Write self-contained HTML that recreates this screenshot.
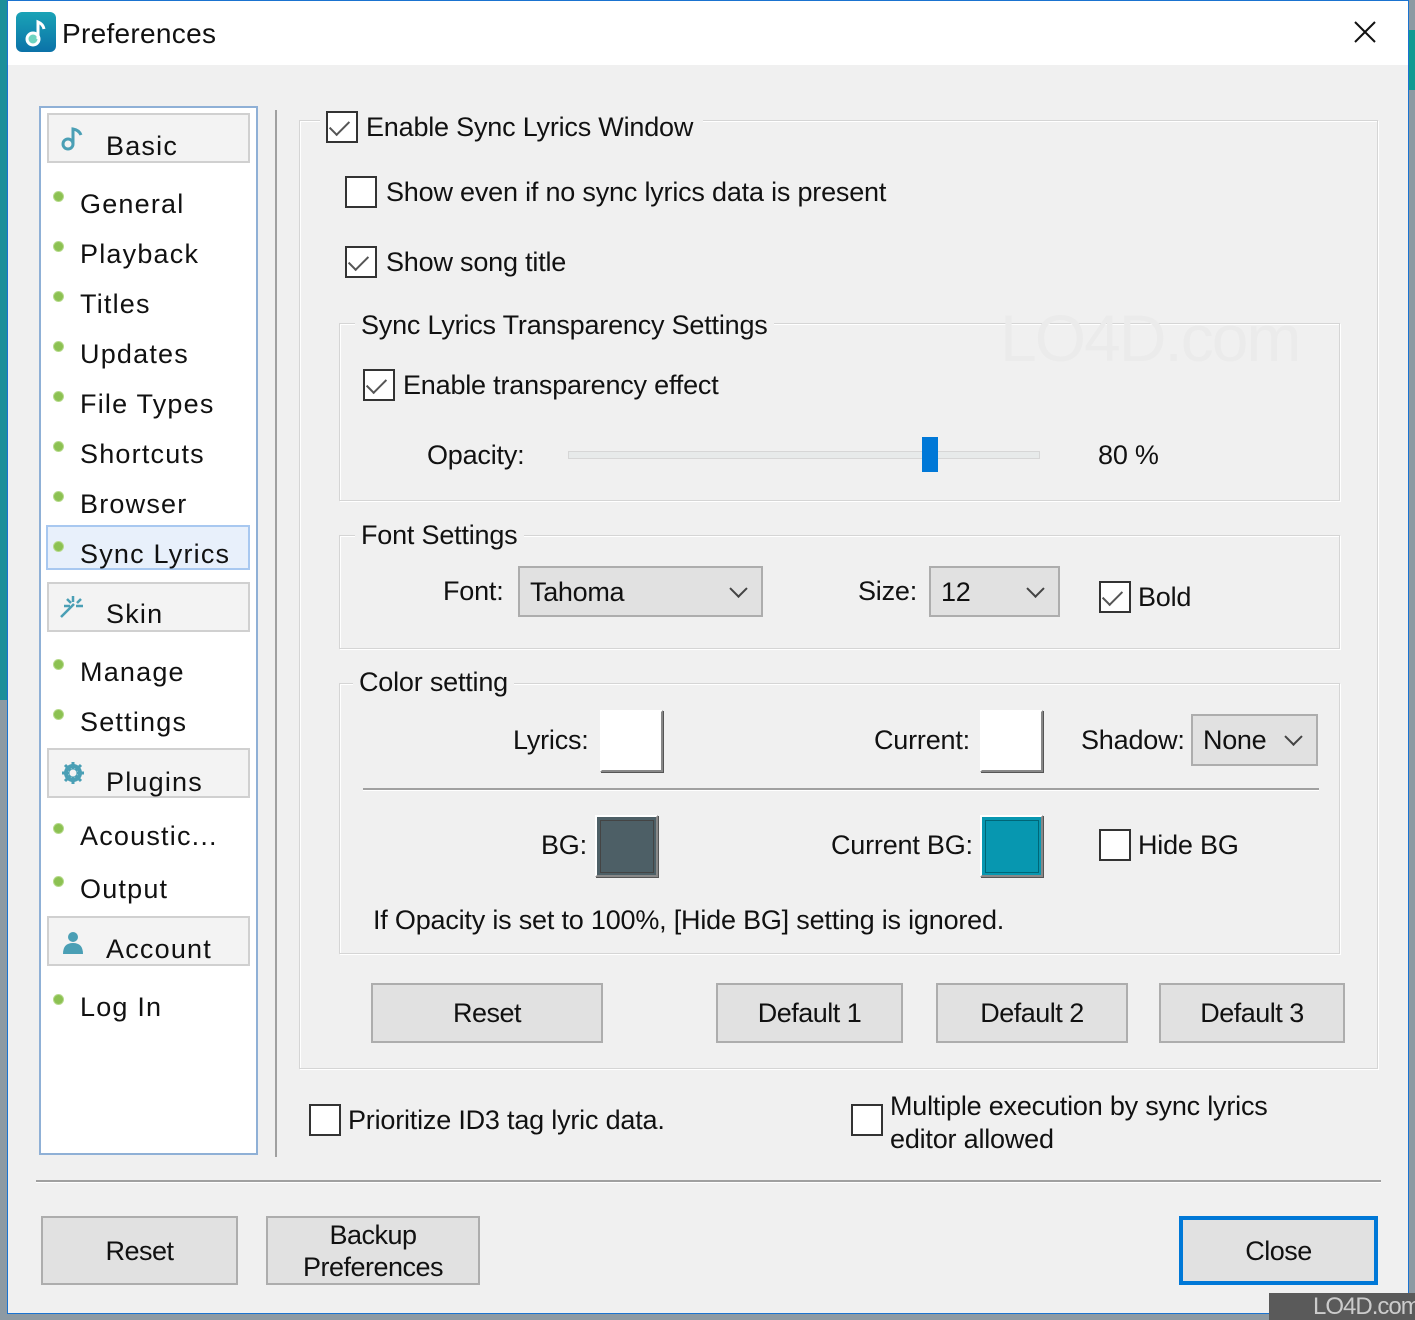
<!DOCTYPE html>
<html><head><meta charset="utf-8"><style>
*{box-sizing:border-box;margin:0;padding:0}
body{width:1415px;height:1320px;position:relative;overflow:hidden;background:#8d9aa3;font-family:"Liberation Sans",sans-serif;color:#111}
.a{position:absolute}
.t{position:absolute;font-size:27px;line-height:30px;white-space:nowrap}
.l{letter-spacing:1.2px}
.n{letter-spacing:-0.2px}
.cb{position:absolute;width:32px;height:32px;border:2px solid #333;background:#fff}
.cb.c::after{content:"";position:absolute;left:6px;top:3px;width:9px;height:17px;border-right:2.5px solid #555;border-bottom:2.5px solid #555;transform:rotate(45deg)}
.grp{position:absolute;border:1px solid #d5d5d5;box-shadow:1px 1px 0 #fff inset,1px 1px 0 #fff}
.lg{position:absolute;background:#f0f0f0;padding:0 6px;font-size:27px;line-height:30px;letter-spacing:-0.2px;white-space:nowrap}
.btn{position:absolute;background:#e1e1e1;border:2px solid #adadad;font-size:27px;display:flex;align-items:center;justify-content:center;text-align:center;line-height:32px;letter-spacing:-0.5px}
.cmb{position:absolute;background:#e1e1e1;border:2px solid #adadad;font-size:27px;line-height:30px;padding-left:10px;display:flex;align-items:center;letter-spacing:-0.3px}
.cmb::after{content:"";position:absolute;right:16px;top:50%;width:11px;height:11px;border-right:2px solid #444;border-bottom:2px solid #444;transform:translateY(-75%) rotate(45deg)}
.sw{position:absolute;width:63px;height:62px;border:2px solid #fff;border-right-color:#888;border-bottom-color:#888;box-shadow:1px 1px 0 #555}
.sw i{position:absolute;left:3px;top:3px;right:2px;bottom:2px;border:1px solid #aaa}
.hd{position:absolute;left:47px;width:203px;height:50px;background:#f3f3f3;border:2px solid #d0d0d0}
.bl{position:absolute;left:54px;width:9px;height:9px;border-radius:50%;background:#8cc152;box-shadow:0 0 0 1px #b5d98a}
</style></head><body>
<div class="a" style="left:0;top:0;width:8px;height:700px;background:#1b8f9a"></div>
<div class="a" style="left:1408px;top:30px;width:7px;height:60px;background:#129a92"></div>
<div class="a" style="left:7px;top:0;width:1402px;height:1314px;background:#f0f0f0;border:1px solid #1a73d0"></div>
<div class="a" style="left:8px;top:1px;width:1400px;height:64px;background:#fff"></div>
<div class="a" style="left:16px;top:12px;width:40px;height:40px;border-radius:6px;background:linear-gradient(#1aa3b6,#0b72a8)"></div>
<svg class="a" style="left:16px;top:12px" width="40" height="40"><circle cx="17" cy="27" r="6" fill="#6fd4c0"/><path d="M22 27 V10 q5 2 6 7" stroke="#fff" stroke-width="3" fill="none"/><circle cx="17" cy="27" r="6" fill="none" stroke="#fff" stroke-width="3"/></svg>
<div class="t" style="left:62px;top:19px;font-size:28px;letter-spacing:0.3px">Preferences</div>
<svg class="a" style="left:1354px;top:21px" width="22" height="22"><path d="M1 1L21 21M21 1L1 21" stroke="#111" stroke-width="2"/></svg>

<!-- left list -->
<div class="a" style="left:39px;top:106px;width:219px;height:1049px;background:#fff;border:2px solid #8fb0d6"></div>
<div class="hd" style="top:113px"></div>
<svg class="a" style="left:60px;top:124px" width="26" height="28"><path d="M13 20V5q6 1 8 6" stroke="#4a9fb5" stroke-width="3" fill="none"/><circle cx="8" cy="20" r="5" fill="none" stroke="#4a9fb5" stroke-width="3"/></svg>
<div class="t l" style="left:106px;top:131px">Basic</div>
<div class="a" style="left:46px;top:525px;width:204px;height:45px;background:#e8f0fb;border:2px solid #a8c8f0"></div>
<div class="bl" style="top:192px"></div><div class="t l" style="left:80px;top:189px">General</div>
<div class="bl" style="top:242px"></div><div class="t l" style="left:80px;top:239px">Playback</div>
<div class="bl" style="top:292px"></div><div class="t l" style="left:80px;top:289px">Titles</div>
<div class="bl" style="top:342px"></div><div class="t l" style="left:80px;top:339px">Updates</div>
<div class="bl" style="top:392px"></div><div class="t l" style="left:80px;top:389px">File Types</div>
<div class="bl" style="top:442px"></div><div class="t l" style="left:80px;top:439px">Shortcuts</div>
<div class="bl" style="top:492px"></div><div class="t l" style="left:80px;top:489px">Browser</div>
<div class="bl" style="top:542px"></div><div class="t l" style="left:80px;top:539px">Sync Lyrics</div>
<div class="hd" style="top:582px"></div>
<svg class="a" style="left:58px;top:593px" width="28" height="26"><path d="M3 24L16 11M15 3v6M9 6l4 4M23 6l-4 4M18 13h7M6 13h6" stroke="#4a9fb5" stroke-width="2.5"/></svg>
<div class="t l" style="left:106px;top:599px">Skin</div>
<div class="bl" style="top:660px"></div><div class="t l" style="left:80px;top:657px">Manage</div>
<div class="bl" style="top:710px"></div><div class="t l" style="left:80px;top:707px">Settings</div>
<div class="hd" style="top:748px"></div>
<svg class="a" style="left:60px;top:760px" width="26" height="26"><circle cx="13" cy="13" r="7" fill="none" stroke="#4a9fb5" stroke-width="4"/><path d="M13 2v22M2 13h22M5 5l16 16M21 5L5 21" stroke="#4a9fb5" stroke-width="3"/><circle cx="13" cy="13" r="3.5" fill="#f3f3f3"/></svg>
<div class="t l" style="left:106px;top:767px">Plugins</div>
<div class="bl" style="top:824px"></div><div class="t l" style="left:80px;top:821px">Acoustic...</div>
<div class="bl" style="top:877px"></div><div class="t l" style="left:80px;top:874px">Output</div>
<div class="hd" style="top:916px"></div>
<svg class="a" style="left:60px;top:930px" width="26" height="26"><circle cx="13" cy="7" r="5" fill="#4a9fb5"/><path d="M3 24q0-11 10-11t10 11z" fill="#4a9fb5"/></svg>
<div class="t l" style="left:106px;top:934px">Account</div>
<div class="bl" style="top:995px"></div><div class="t l" style="left:80px;top:992px">Log In</div>
<div class="a" style="left:275px;top:110px;width:2px;height:1047px;background:#a0a0a0"></div>

<!-- main -->
<div class="grp" style="left:299px;top:120px;width:1079px;height:949px"></div>
<div class="a" style="left:320px;top:112px;width:42px;height:30px;background:#f0f0f0"></div>
<div class="lg" style="left:360px;top:112px;padding:0 10px 0 6px">Enable Sync Lyrics Window</div>
<div class="cb c" style="left:326px;top:111px"></div>
<div class="cb" style="left:345px;top:176px"></div><div class="t n" style="left:386px;top:177px">Show even if no sync lyrics data is present</div>
<div class="cb c" style="left:345px;top:246px"></div><div class="t n" style="left:386px;top:247px">Show song title</div>

<div class="grp" style="left:339px;top:323px;width:1001px;height:178px"></div>
<div class="lg" style="left:355px;top:310px">Sync Lyrics Transparency Settings</div>
<div class="cb c" style="left:363px;top:369px"></div><div class="t n" style="left:403px;top:370px">Enable transparency effect</div>
<div class="t n" style="left:427px;top:440px">Opacity:</div>
<div class="a" style="left:568px;top:451px;width:472px;height:8px;background:#e7eaea;border:1px solid #d6d6d6"></div>
<div class="a" style="left:922px;top:437px;width:16px;height:35px;background:#0078d7"></div>
<div class="t n" style="left:1098px;top:440px">80 %</div>

<div class="grp" style="left:339px;top:535px;width:1001px;height:114px"></div>
<div class="lg" style="left:355px;top:520px">Font Settings</div>
<div class="t n" style="left:443px;top:576px">Font:</div>
<div class="cmb" style="left:518px;top:566px;width:245px;height:51px">Tahoma</div>
<div class="t n" style="left:858px;top:576px">Size:</div>
<div class="cmb" style="left:929px;top:566px;width:131px;height:51px">12</div>
<div class="cb c" style="left:1099px;top:581px"></div><div class="t n" style="left:1138px;top:582px">Bold</div>

<div class="grp" style="left:339px;top:683px;width:1001px;height:271px"></div>
<div class="lg" style="left:353px;top:667px">Color setting</div>
<div class="t n" style="left:513px;top:725px">Lyrics:</div>
<div class="sw" style="left:600px;top:710px;background:#fff"></div>
<div class="t n" style="left:874px;top:725px">Current:</div>
<div class="sw" style="left:980px;top:710px;background:#fff"></div>
<div class="t n" style="left:1081px;top:725px">Shadow:</div>
<div class="cmb" style="left:1191px;top:714px;width:127px;height:52px">None</div>
<div class="a" style="left:363px;top:788px;width:956px;height:2px;background:#a0a0a0;box-shadow:0 1px 0 #fff"></div>
<div class="t n" style="left:541px;top:830px">BG:</div>
<div class="sw" style="left:595px;top:815px;background:#4d5f66"><i style="border-color:#444"></i></div>
<div class="t n" style="left:831px;top:830px">Current BG:</div>
<div class="sw" style="left:980px;top:815px;background:#0797b0"><i style="border-color:#067"></i></div>
<div class="cb" style="left:1099px;top:829px"></div><div class="t n" style="left:1138px;top:830px">Hide BG</div>
<div class="t n" style="left:373px;top:905px">If Opacity is set to 100%, [Hide BG] setting is ignored.</div>

<div class="btn" style="left:371px;top:983px;width:232px;height:60px">Reset</div>
<div class="btn" style="left:716px;top:983px;width:187px;height:60px">Default 1</div>
<div class="btn" style="left:936px;top:983px;width:192px;height:60px">Default 2</div>
<div class="btn" style="left:1159px;top:983px;width:186px;height:60px">Default 3</div>

<div class="cb" style="left:309px;top:1104px"></div><div class="t n" style="left:348px;top:1105px">Prioritize ID3 tag lyric data.</div>
<div class="cb" style="left:851px;top:1104px"></div>
<div class="t n" style="left:890px;top:1090px;line-height:33px">Multiple execution by sync lyrics<br>editor allowed</div>

<div class="a" style="left:36px;top:1180px;width:1345px;height:2px;background:#a0a0a0;box-shadow:0 1px 0 #fff"></div>
<div class="btn" style="left:41px;top:1216px;width:197px;height:69px">Reset</div>
<div class="btn" style="left:266px;top:1216px;width:214px;height:69px">Backup<br>Preferences</div>
<div class="btn" style="left:1179px;top:1216px;width:199px;height:69px;border:4px solid #0078d7">Close</div>

<div class="a" style="left:1269px;top:1293px;width:146px;height:27px;background:#5a5a5a;color:#ccc;font-size:24px;line-height:27px;padding-left:44px;letter-spacing:-1px">LO4D.com</div>
<div class="a" style="left:1000px;top:300px;font-size:66px;color:#ebebeb;letter-spacing:-2px">LO4D.com</div>
</body></html>
